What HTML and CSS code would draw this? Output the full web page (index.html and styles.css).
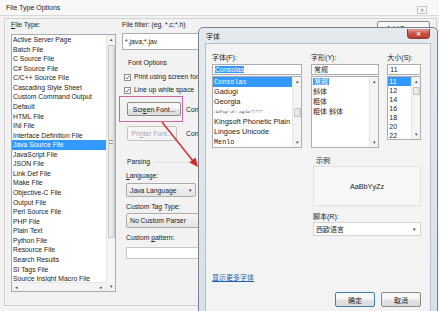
FILE: index.html
```html
<!DOCTYPE html>
<html lang="en">

<head>
  <meta charset="UTF-8" />
  <title>File Type Options</title>
  <link rel="stylesheet" href="styles.css">
</head>

<body>
  <!-- Main dialog -->
  <div class="window">
    <div class="titlebar">
      <span>File Type Options</span>
      <span class="win-close">&#x2715;</span>
    </div>

    <div class="dlg-body">
      <!-- File type list -->
      <section class="types-col">
        <div class="label"><u>F</u>ile Type:</div>
        <div class="listbox types">
          <ul class="items">
            <li>Active Server Page</li>
            <li>Batch File</li>
            <li>C Source File</li>
            <li>C# Source File</li>
            <li>C/C++ Source File</li>
            <li>Cascading Style Sheet</li>
            <li>Custom Command Output</li>
            <li>Default</li>
            <li>HTML File</li>
            <li>INI File</li>
            <li>Interface Definition File</li>
            <li class="selected">Java Source File</li>
            <li>JavaScript File</li>
            <li>JSON File</li>
            <li>Link Def File</li>
            <li>Make File</li>
            <li>Objective-C File</li>
            <li>Output File</li>
            <li>Perl Source File</li>
            <li>PHP File</li>
            <li>Plain Text</li>
            <li>Python File</li>
            <li>Resource File</li>
            <li>Search Results</li>
            <li>SI Tags File</li>
            <li>Source Insight Macro File</li>
          </ul>
          <div class="vscroll">
            <span class="arrow">&#x25B4;</span>
            <span class="thumb long"><i></i></span>
            <span class="arrow bottom">&#x25BE;</span>
          </div>
          <div class="hscroll">
            <span class="arrow">&#x25C2;</span>
            <span class="arrow">&#x25B8;</span>
          </div>
        </div>
      </section>

      <!-- Options -->
      <section class="options-col">
        <div class="filter">
          <div class="label">File filter: (eg. *.c;*.h)</div>
          <button class="btn add-btn">Add Type...</button>
          <div class="textbox filter-input">*.java;*.jav</div>
        </div>

        <div class="group-title">Font Options</div>
        <label class="check"><span class="box"><svg viewBox="0 0 7 7"><polyline points="1.2,3.6 2.8,5.4 5.8,1.3" /></svg></span>Print using screen fonts</label>
        <label class="check second"><span class="box"><svg viewBox="0 0 7 7"><polyline points="1.2,3.6 2.8,5.4 5.8,1.3" /></svg></span>Line up white space</label>

        <div class="font-btns">
          <button class="btn screen-btn">Scr<u>e</u>en Font...</button>
          <span class="font-name">Consolas 10</span>
          <button class="btn printer-btn" disabled>Pri<u>n</u>ter Font...</button>
          <span class="font-name">Consolas 10</span>
        </div>

        <div class="group-title parsing">Parsing</div>
        <div class="label field"><u>L</u>anguage:</div>
        <div class="combo lang">Java Language<span class="drop">&#x25BE;</span></div>
        <div class="label field">Custom Tag Type:</div>
        <div class="combo tagtype">No Custom Parser<span class="drop">&#x25BE;</span></div>
        <div class="label field">Custom <u>p</u>attern:</div>
        <div class="textbox pattern"></div>
      </section>
    </div>
  </div>

  <!-- Annotations -->
  <div class="highlight"></div>
  <svg class="arrow-note" width="439" height="311" viewBox="0 0 439 311">
    <line x1="162" y1="122" x2="193" y2="161" />
    <polygon points="198,167 189.3,162.5 195.5,157.5" />
  </svg>

  <!-- Font dialog -->
  <div class="fontdlg">
    <div class="fd-title">
      <span>字体</span>
      <span class="fd-close">&#x2715;</span>
    </div>
    <div class="fd-body">
      <div class="fd-pickers">
        <div class="fd-col face">
          <div class="fd-label">字体(F):</div>
          <div class="fd-input"><span class="sel-text">Consolas</span></div>
          <div class="fd-list tall">
            <ul class="items">
              <li class="mono"><span class="selected full">Consolas</span></li>
              <li>Gadugi</li>
              <li>Georgia</li>
              <li class="script">AaFug+ëi+.ugAa?????</li>
              <li>Kingsoft Phonetic Plain</li>
              <li>Lingoes Unicode</li>
              <li class="mono">Menlo</li>
            </ul>
            <div class="vscroll">
              <span class="arrow">&#x25B4;</span>
              <span class="thumb small"></span>
              <span class="arrow bottom">&#x25BE;</span>
            </div>
          </div>
        </div>

        <div class="fd-col style">
          <div class="fd-label">字形(Y):</div>
          <div class="fd-input">常规</div>
          <div class="fd-list tall">
            <ul class="items">
              <li><span class="selected">常规</span></li>
              <li>斜体</li>
              <li>粗体</li>
              <li>粗体 斜体</li>
            </ul>
            <div class="vscroll plain">
              <span class="arrow">&#x25B4;</span>
              <span class="arrow bottom">&#x25BE;</span>
            </div>
          </div>
        </div>

        <div class="fd-col size">
          <div class="fd-label">大小(S):</div>
          <div class="fd-input">11</div>
          <div class="fd-list short">
            <ul class="items sizes">
              <li><span class="selected full">11</span></li>
              <li>12</li>
              <li>14</li>
              <li>16</li>
              <li>18</li>
              <li>20</li>
              <li>22</li>
            </ul>
            <div class="vscroll">
              <span class="arrow">&#x25B4;</span>
              <span class="thumb tiny"></span>
              <span class="arrow bottom">&#x25BE;</span>
            </div>
          </div>
        </div>
      </div>

      <div class="fd-lower">
        <div class="fd-label sample-label">示例</div>
        <div class="sample">AaBbYyZz</div>
        <div class="fd-label script-label">脚本(R):</div>
        <div class="fd-select">西欧语言<span class="drop">&#x25BE;</span></div>
      </div>

      <div class="fd-foot">
        <a href="#" class="more-fonts">显示更多字体</a>
        <div class="fd-buttons">
          <button class="btn fd-btn default">确定</button>
          <button class="btn fd-btn">取消</button>
        </div>
      </div>
    </div>
  </div>
</body>

</html>
```

FILE: styles.css
```css
/* --- Base --- */
* {
  box-sizing: border-box;
}

html,
body {
  margin: 0;
}

body {
  position: relative;
  width: 439px;
  height: 311px;
  overflow: hidden;
  font-family: "Liberation Sans", Arial, sans-serif;
  font-size: 6.8px;
  color: #222;
  background: #f2f2f2;
}

ul {
  list-style: none;
  margin: 0;
  padding: 0;
}

u {
  text-decoration-thickness: 0.5px;
}

/* --- Main window --- */
.window {
  height: 311px;
  display: flex;
  flex-direction: column;
}

.titlebar {
  height: 16px;
  display: flex;
  align-items: center;
  padding: 0 12px 0 6px;
  background: #f8f8f8;
  border-bottom: 1px solid #d8d8d8;
  font-size: 7px;
}

.win-close {
  margin-left: auto;
  margin-top: 4px;
  width: 10px;
  height: 8px;
  display: flex;
  align-items: center;
  justify-content: center;
  font-size: 5px;
  color: #777;
  border: 1px solid #c4c4c4;
}

.dlg-body {
  flex: 1;
  display: flex;
  gap: 6px;
  margin: 2px 2px 5px 4px;
  padding: 2px 6px 0 6px;
  border: 1px solid #d2d2d2;
}

.label {
  line-height: 8px;
  white-space: nowrap;
}

/* --- List boxes --- */
.types-col {
  width: 105px;
  flex: none;
}

.listbox {
  margin-top: 5px;
  height: 258px;
  display: grid;
  grid-template-columns: minmax(0, 1fr) 9px;
  grid-template-rows: minmax(0, 1fr) 9px;
  background: #fff;
  border: 1px solid #a9abaf;
}

.items {
  grid-column: 1;
  grid-row: 1;
  overflow: hidden;
  white-space: nowrap;
}

.types .items li {
  line-height: 9.56px;
  padding-left: 1px;
}

.types .items li.selected {
  background: #3399ff;
  color: #fff;
}

.vscroll {
  grid-column: 2;
  grid-row: 1 / 3;
  display: flex;
  flex-direction: column;
  align-items: center;
  background: #f4f4f4;
  border-left: 1px solid #e6e6e6;
}

.arrow {
  font-size: 5px;
  line-height: 9px;
  color: #555;
}

.arrow.bottom {
  margin-top: auto;
}

.thumb {
  width: 7px;
  border: 1px solid #c3c3c3;
  border-radius: 1px;
  background: linear-gradient(90deg, #f0f0f0, #e0e0e0);
  display: flex;
  align-items: center;
  justify-content: center;
}

.thumb.long {
  height: 193px;
  margin-top: 1px;
}

.thumb i {
  width: 4px;
  height: 4px;
  border-top: 1px solid #999;
  border-bottom: 1px solid #999;
}

.hscroll {
  grid-column: 1;
  grid-row: 2;
  display: flex;
  justify-content: space-between;
  padding: 0 3px;
  background: #f4f4f4;
  border-top: 1px solid #e6e6e6;
}

/* --- Options column --- */
.options-col {
  flex: 1;
  display: flex;
  flex-direction: column;
  align-items: flex-start;
}

.filter {
  width: 100%;
  display: grid;
  grid-template-columns: 1fr 53px;
  grid-template-rows: 8px 17px;
  column-gap: 7px;
  row-gap: 4px;
}

.add-btn {
  grid-column: 2;
  grid-row: 1 / 3;
  height: 15px;
}

.textbox {
  background: #fff;
  border: 1px solid #abadb3;
  padding-left: 2px;
}

.filter-input {
  grid-column: 1;
  grid-row: 2;
  line-height: 15px;
}

.group-title {
  margin: 9px 0 0 6px;
  line-height: 8px;
}

.check {
  display: flex;
  align-items: center;
  margin: 6px 0 0 2px;
  line-height: 8px;
  white-space: nowrap;
}

.check.second {
  margin-top: 5px;
}

.box {
  width: 7px;
  height: 7px;
  margin-right: 3px;
  background: #fafafa;
  border: 1px solid #8e8f8f;
  display: flex;
}

.box svg {
  width: 100%;
  height: 100%;
  fill: none;
  stroke: #3a5a86;
  stroke-width: 1.2;
}

/* --- Buttons --- */
.btn {
  font: inherit;
  color: #222;
  padding: 0;
  height: 14px;
  white-space: nowrap;
  border: 1px solid #8a8a8a;
  border-radius: 2px;
  background: linear-gradient(#f7f7f7 45%, #e2e2e2 55%, #dcdcdc);
}

.font-btns {
  margin: 8px 0 0 5px;
  display: grid;
  grid-template-columns: 59px 1fr;
  row-gap: 10px;
  align-items: center;
  white-space: nowrap;
}

.screen-btn {
  width: 54px;
}

.printer-btn {
  width: 50px;
  height: 15px;
  color: #a9a9a9;
  border-color: #c4c4c4;
  background: #f4f4f4;
}

.group-title.parsing {
  margin: 17px 0 0 5px;
  width: calc(100% - 5px);
  display: flex;
  align-items: center;
  gap: 4px;
}

.group-title.parsing::after {
  content: "";
  flex: 1;
  border-top: 1px solid #e0e0e0;
}

.label.field {
  margin: 6px 0 0 4px;
}

.combo {
  margin: 3px 0 0 4px;
  height: 14px;
  display: flex;
  align-items: center;
  padding: 0 3px;
  white-space: nowrap;
  border: 1px solid #acacac;
  border-radius: 2px;
  background: linear-gradient(#f5f5f5, #e3e3e3);
}

.combo.lang {
  width: 70px;
}

.combo.tagtype {
  margin-top: 2px;
  height: 15px;
  width: 130px;
}

.drop {
  margin-left: auto;
  font-size: 5px;
  color: #333;
}

.pattern {
  margin: 5px 0 0 4px;
  width: 130px;
  height: 12px;
  border-color: #c7c7c7;
}

/* --- Annotations --- */
.highlight {
  position: absolute;
  left: 119px;
  top: 96px;
  width: 64px;
  height: 26px;
  border: 1.5px solid #d0659b;
}

.arrow-note {
  position: absolute;
  left: 0;
  top: 0;
  z-index: 2;
}

.arrow-note line {
  stroke: #d42a2a;
  stroke-width: 1.4;
}

.arrow-note polygon {
  fill: #d42a2a;
}

/* --- Font dialog --- */
.fontdlg {
  position: absolute;
  left: 198px;
  top: 27px;
  width: 240px;
  height: 292px;
  display: flex;
  flex-direction: column;
  padding: 0 6px;
  font-family: "Liberation Sans", "Noto Sans CJK SC", sans-serif;
  font-size: 7px;
  background: linear-gradient(#e4e9ee, #d9e0e7);
  border: 1px solid #768290;
  border-radius: 5px 5px 0 0;
}

.fd-title {
  height: 15px;
  display: flex;
  align-items: center;
  padding-left: 1px;
}

.fd-close {
  align-self: flex-start;
  margin: 1px 1px 0 auto;
  width: 23px;
  height: 10px;
  display: flex;
  align-items: center;
  justify-content: center;
  font-size: 6px;
  font-weight: bold;
  color: #fff;
  border: 1px solid #8b3a35;
  border-top: none;
  border-radius: 0 0 4px 4px;
  background: linear-gradient(#e6a196, #c85448 50%, #b83a2f);
}

.fd-body {
  flex: 1;
  display: flex;
  flex-direction: column;
  padding: 9px 9px 0 6px;
  background: #f3f3f3;
  border: 1px solid #b7c0c9;
}

.fd-pickers {
  display: flex;
}

.fd-col.face {
  width: 91px;
}

.fd-col.style {
  width: 69px;
  margin-left: 9px;
}

.fd-col.size {
  width: 34px;
  margin-left: 8px;
}

.fd-label {
  line-height: 9px;
  white-space: nowrap;
}

.fd-input {
  margin-top: 2px;
  height: 11px;
  line-height: 9px;
  padding-left: 2px;
  background: #fff;
  border: 1px solid #abadb3;
}

.sel-text {
  background: #3399ff;
  color: #fff;
}

.fd-list {
  margin-top: 1px;
  display: grid;
  grid-template-columns: minmax(0, 1fr) 9px;
  background: #fff;
  border: 1px solid #abadb3;
}

.fd-list.tall {
  height: 72px;
}

.fd-list.short {
  height: 64px;
}

.fd-list .vscroll {
  grid-row: 1;
}

.fd-list .items li {
  height: 10px;
  line-height: 10px;
  padding-left: 1px;
  overflow: hidden;
}

.face .items li {
  font-size: 7.4px;
}

.fd-list .items.sizes li {
  height: 9px;
  line-height: 9px;
}

.fd-list li.mono {
  font-family: "Liberation Mono", monospace;
  font-size: 6.8px;
}

.fd-list li.script {
  font-family: "Liberation Serif", serif;
  font-style: italic;
  font-size: 5px;
  color: #444;
}

.selected {
  background: #3399ff;
  color: #fff;
  padding: 0 1px;
}

.selected.full {
  display: block;
  margin-left: -1px;
  padding-left: 1px;
}

.thumb.small {
  height: 9px;
  margin-top: 22px;
}

.thumb.tiny {
  height: 8px;
  margin-top: 1px;
}

.fd-lower {
  margin: 8px 0 0 101px;
}

.sample-label {
  padding-left: 3px;
}

.sample {
  margin-top: 1px;
  height: 40px;
  display: flex;
  align-items: center;
  justify-content: center;
  font-size: 7.2px;
  background: #f7f7f7;
  border: 1px solid #e1e1e1;
}

.script-label {
  margin-top: 6px;
}

.fd-select {
  margin-top: 1px;
  height: 14px;
  display: flex;
  align-items: center;
  padding: 0 4px 0 2px;
  background: #fff;
  border: 1px solid #d4d4d4;
}

.fd-foot {
  margin-top: 37px;
  display: flex;
  flex-direction: column;
}

.more-fonts {
  align-self: flex-start;
  color: #1a5fb4;
  line-height: 9px;
  text-decoration-thickness: 0.5px;
}

.fd-buttons {
  margin-top: 10px;
  display: flex;
  justify-content: flex-end;
  gap: 6px;
}

.fd-btn {
  width: 40px;
  height: 15px;
  font-family: "Liberation Sans", "Noto Sans CJK SC", sans-serif;
  font-size: 7px;
}

.fd-btn.default {
  border-color: #3c7fb1;
}
```
